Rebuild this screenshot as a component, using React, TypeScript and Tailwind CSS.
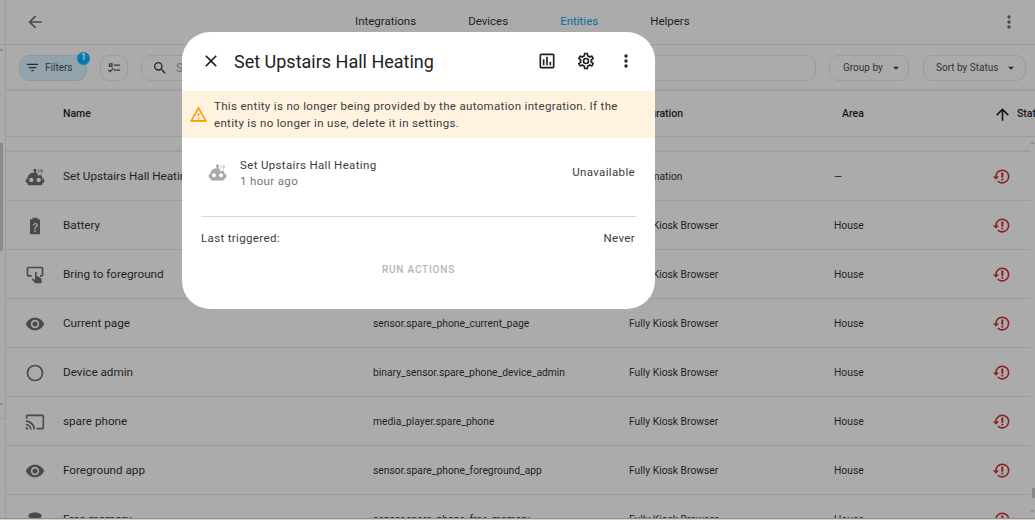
import type { ReactNode } from 'react';

const mdi = {
  back: 'M20,11V13H8L13.5,18.5L12.08,19.92L4.16,12L12.08,4.08L13.5,5.5L8,11H20Z',
  dots: 'M12,16A2,2 0 0,1 14,18A2,2 0 0,1 12,20A2,2 0 0,1 10,18A2,2 0 0,1 12,16M12,10A2,2 0 0,1 14,12A2,2 0 0,1 12,14A2,2 0 0,1 10,12A2,2 0 0,1 12,10M12,4A2,2 0 0,1 14,6A2,2 0 0,1 12,8A2,2 0 0,1 10,6A2,2 0 0,1 12,4Z',
  close: 'M19,6.41L17.59,5L12,10.59L6.41,5L5,6.41L10.59,12L5,17.59L6.41,19L12,13.41L17.59,19L19,17.59L13.41,12L19,6.41Z',
  filter: 'M6,13H18V11H6M3,6V8H21V6M10,18H14V16H10V18Z',
  search: 'M9.5,3A6.5,6.5 0 0,1 16,9.5C16,11.11 15.41,12.59 14.44,13.73L14.71,14H15.5L20.5,19L19,20.5L14,15.5V14.71L13.73,14.44C12.59,15.41 11.11,16 9.5,16A6.5,6.5 0 0,1 3,9.5A6.5,6.5 0 0,1 9.5,3M9.5,5C7,5 5,7 5,9.5C5,12 7,14 9.5,14C12,14 14,12 14,9.5C14,7 12,5 9.5,5Z',
  select: 'M3 5H9V11H3V5M5 7V9H7V7H5M11 7H21V9H11V7M11 15H21V17H11V15M5 20L1.5 16.5L2.91 15.09L5 17.17L9.59 12.59L11 14L5 20Z',
  alert: 'M12,2L1,21H23M12,6L19.53,19H4.47M11,10V14H13V10M11,16V18H13V16',
  eye: 'M12,9A3,3 0 0,0 9,12A3,3 0 0,0 12,15A3,3 0 0,0 15,12A3,3 0 0,0 12,9M12,17A5,5 0 0,1 7,12A5,5 0 0,1 12,7A5,5 0 0,1 17,12A5,5 0 0,1 12,17M12,4.5C7,4.5 2.73,7.61 1,12C2.73,16.39 7,19.5 12,19.5C17,19.5 21.27,16.39 23,12C21.27,7.61 17,4.5 12,4.5Z',
  cast: 'M1,10V12A9,9 0 0,1 10,21H12C12,14.92 7.07,10 1,10M1,14V16A5,5 0 0,1 6,21H8A7,7 0 0,0 1,14M1,18V21H4A3,3 0 0,0 1,18M21,3H3C1.89,3 1,3.89 1,5V8H3V5H21V19H14V21H21A2,2 0 0,0 23,19V5C23,3.89 22.1,3 21,3Z',
  circle: 'M12,20A8,8 0 0,1 4,12A8,8 0 0,1 12,4A8,8 0 0,1 20,12A8,8 0 0,1 12,20M12,2A10,10 0 0,0 2,12A10,10 0 0,0 12,22A10,10 0 0,0 22,12A10,10 0 0,0 12,2Z',
  chart: 'M9 17H7V10H9V17M13 17H11V7H13V17M17 17H15V13H17V17M19 19H5V5H19V19.1M19 3H5C3.9 3 3 3.9 3 5V19C3 20.1 3.9 21 5 21H19C20.1 21 21 20.1 21 19V5C21 3.9 20.1 3 19 3Z',
  cog: 'M12,8A4,4 0 0,1 16,12A4,4 0 0,1 12,16A4,4 0 0,1 8,12A4,4 0 0,1 12,8M12,10A2,2 0 0,0 10,12A2,2 0 0,0 12,14A2,2 0 0,0 14,12A2,2 0 0,0 12,10M10,22C9.75,22 9.54,21.82 9.5,21.58L9.13,18.93C8.5,18.68 7.96,18.34 7.44,17.94L4.95,18.95C4.73,19.03 4.46,18.95 4.34,18.73L2.34,15.27C2.21,15.05 2.27,14.78 2.46,14.63L4.57,12.97L4.5,12L4.57,11L2.46,9.37C2.27,9.22 2.21,8.95 2.34,8.73L4.34,5.27C4.46,5.05 4.73,4.96 4.95,5.05L7.44,6.05C7.96,5.66 8.5,5.32 9.13,5.07L9.5,2.42C9.54,2.18 9.75,2 10,2H14C14.25,2 14.46,2.18 14.5,2.42L14.87,5.07C15.5,5.32 16.04,5.66 16.56,6.05L19.05,5.05C19.27,4.96 19.54,5.05 19.66,5.27L21.66,8.73C21.79,8.95 21.73,9.22 21.54,9.37L19.43,11L19.5,12L19.43,13L21.54,14.63C21.73,14.78 21.79,15.05 21.66,15.27L19.66,18.73C19.54,18.95 19.27,19.04 19.05,18.95L16.56,17.95C16.04,18.34 15.5,18.68 14.87,18.93L14.5,21.58C14.46,21.82 14.25,22 14,22H10M11.25,4L10.88,6.61C9.68,6.86 8.62,7.5 7.85,8.39L5.44,7.35L4.69,8.65L6.8,10.2C6.4,11.37 6.4,12.64 6.8,13.8L4.68,15.36L5.43,16.66L7.86,15.62C8.63,16.5 9.68,17.14 10.87,17.38L11.24,20H12.76L13.13,17.39C14.32,17.14 15.37,16.5 16.14,15.62L18.57,16.66L19.32,15.36L17.2,13.81C17.6,12.64 17.6,11.37 17.2,10.2L19.31,8.65L18.56,7.35L16.15,8.39C15.38,7.5 14.32,6.86 13.12,6.62L12.75,4H11.25Z',
  battery: 'M16.67,4H15V2H9V4H7.33A1.33,1.33 0 0,0 6,5.33V20.66C6,21.4 6.6,22 7.33,22H16.67C17.4,22 18,21.4 18,20.67V5.33C18,4.6 17.4,4 16.67,4M13,19H11V17H13V19M14.6,12.7L13.5,13.8C12.9,14.4 12.75,14.9 12.75,15.8H11.2C11.2,14.6 11.6,13.8 12.4,13L13.3,12.1C13.8,11.6 13.8,10.7 13.3,10.3C12.6,9.6 11,9.9 10.8,11.4H9.2C9.5,8.4 13.2,7.3 14.7,9.2C15.6,10.3 15.5,11.8 14.6,12.7Z',
  tap: 'M20 2H4C2.9 2 2 2.9 2 4V12C2 13.11 2.9 14 4 14H8V12H4V4H20V12H18V14H20C21.1 14 22 13.1 22 12V4C22 2.9 21.1 2 20 2M20 20.5C19.97 21.32 19.32 21.97 18.5 22H13C12.62 22 12.26 21.85 12 21.57L8 17.37L8.74 16.6C8.93 16.39 9.2 16.28 9.5 16.28H9.7L12 18V9C12 8.45 12.45 8 13 8S14 8.45 14 9V13.47L15.21 13.6L19.15 15.79C19.68 16.03 20 16.56 20 17.14V20.5Z',
  robot: 'M20 4H18V3H20.5C20.78 3 21 3.22 21 3.5V5.5C21 5.78 20.78 6 20.5 6H20V7H19V5H20V4M19 9H20V8H19V9M17 3H16V7H17V3M23 15V18C23 18.55 22.55 19 22 19H21V20C21 21.11 20.11 22 19 22H5C3.9 22 3 21.11 3 20V19H2C1.45 19 1 18.55 1 18V15C1 14.45 1.45 14 2 14H3C3 10.13 6.13 7 10 7H11V5.73C10.4 5.39 10 4.74 10 4C10 2.9 10.9 2 12 2S14 2.9 14 4C14 4.74 13.6 5.39 13 5.73V7H14C14.34 7 14.67 7.03 15 7.08V10H19.74C20.53 11.13 21 12.5 21 14H22C22.55 14 23 14.45 23 15M10 15.5C10 14.12 8.88 13 7.5 13S5 14.12 5 15.5 6.12 18 7.5 18 10 16.88 10 15.5M19 15.5C19 14.12 17.88 13 16.5 13S14 14.12 14 15.5 15.12 18 16.5 18 19 16.88 19 15.5Z',
  restore: 'M13,3A9,9 0 0,0 4,12H1L4.89,15.89L4.96,16.03L9,12H6A7,7 0 0,1 13,5A7,7 0 0,1 20,12A7,7 0 0,1 13,19C11.07,19 9.32,18.21 8.06,16.94L6.64,18.36C8.27,20 10.5,21 13,21A9,9 0 0,0 22,12A9,9 0 0,0 13,3M11.75,7V13.5H14.25V7M11.75,14.75V17H14.25V14.75',
  up: 'M13,20H11V8L5.5,13.5L4.08,12.08L12,4.16L19.92,12.08L18.5,13.5L13,8V20Z',
  down: 'M7,10L12,15L17,10H7Z',
  database: 'M12,3C7.58,3 4,4.79 4,7C4,9.21 7.58,11 12,11C16.42,11 20,9.21 20,7C20,4.79 16.42,3 12,3M4,9V12C4,14.21 7.58,16 12,16C16.42,16 20,14.21 20,12V9C20,11.21 16.42,13 12,13C7.58,13 4,11.21 4,9M4,14V17C4,19.21 7.58,21 12,21C16.42,21 20,19.21 20,17V14C20,16.21 16.42,18 12,18C7.58,18 4,16.21 4,14Z',
};

function Icon({ d, className }: { d: string; className: string }) {
  return (
    <svg viewBox="0 0 24 24" fill="currentColor" fillRule="evenodd" className={className}>
      <path d={d} />
    </svg>
  );
}

function ScrollArrow({ className }: { className: string }) {
  return (
    <svg viewBox="0 0 6 4" fill="#8f8f8f" className={`absolute h-[3px] w-[5px] ${className}`}>
      <path d="M3 0L6 4H0Z" />
    </svg>
  );
}

const rows = [
  { icon: mdi.robot, name: 'Set Upstairs Hall Heating', entity: '', integration: 'Automation', area: '—' },
  { icon: mdi.battery, name: 'Battery', entity: 'sensor.spare_phone_battery', integration: 'Fully Kiosk Browser', area: 'House' },
  { icon: mdi.tap, name: 'Bring to foreground', entity: 'button.spare_phone_bring_to_foreground', integration: 'Fully Kiosk Browser', area: 'House' },
  { icon: mdi.eye, name: 'Current page', entity: 'sensor.spare_phone_current_page', integration: 'Fully Kiosk Browser', area: 'House' },
  { icon: mdi.circle, name: 'Device admin', entity: 'binary_sensor.spare_phone_device_admin', integration: 'Fully Kiosk Browser', area: 'House' },
  { icon: mdi.cast, name: 'spare phone', entity: 'media_player.spare_phone', integration: 'Fully Kiosk Browser', area: 'House' },
  { icon: mdi.eye, name: 'Foreground app', entity: 'sensor.spare_phone_foreground_app', integration: 'Fully Kiosk Browser', area: 'House' },
  { icon: mdi.database, name: 'Free memory', entity: 'sensor.spare_phone_free_memory', integration: 'Fully Kiosk Browser', area: 'House' },
];

function Pill({ children, className }: { children: ReactNode; className: string }) {
  return (
    <div className={`flex h-[26px] items-center rounded-[10px] border border-[#9c9c9c] ${className}`}>
      {children}
    </div>
  );
}

function Tab({ label, active }: { label: string; active?: boolean }) {
  return <span className={`text-[11.5px] ${active ? 'text-[#0a6d9e]' : 'text-[#1f1f1f]'}`}>{label}</span>;
}

export default function App() {
  return (
    <div className="relative flex h-[520px] w-[1035px] flex-col overflow-hidden bg-[#ababab] font-['Roboto',sans-serif]">
      <div className="flex min-h-0 flex-1">
        {/* sidebar edge + page scrollbar */}
        <div className="relative w-[6px] shrink-0 border-r border-[#9f9f9f]">
          <div className="absolute left-0 top-[44px] h-px w-[5px] bg-[#9c9c9c]" />
          <ScrollArrow className="-left-[1px] top-[48px]" />
          <div className="absolute left-0 top-[143px] h-[108px] w-[3px] bg-[#8a8a8a]" />
          <ScrollArrow className="-left-[1px] top-[403px] rotate-180" />
          <div className="absolute left-0 top-[418px] h-px w-[5px] bg-[#9c9c9c]" />
        </div>

        <div className="flex min-w-0 flex-1 flex-col">
          <header className="relative flex h-[45px] shrink-0 items-center border-b border-[#9c9c9c]">
            <Icon d={mdi.back} className="ml-[19px] h-[20px] w-[20px] text-[#4a4a4a]" />
            <nav className="absolute left-[349px] flex gap-[52px]">
              <Tab label="Integrations" />
              <Tab label="Devices" />
              <Tab label="Entities" active />
              <Tab label="Helpers" />
            </nav>
            <Icon d={mdi.dots} className="ml-auto mr-[16px] h-[20px] w-[20px] text-[#4a4a4a]" />
          </header>

          <div className="flex h-[46px] shrink-0 items-center border-b-2 border-[#9f9f9f] pl-[13px] pt-px">
            <div className="relative mr-[13px] flex h-[26px] w-[68px] items-center rounded-[10px] border border-[#8d9ba3] bg-[#92a3ad] pl-[5px]">
              <Icon d={mdi.filter} className="h-[15px] w-[15px] text-[#2a2a2a]" />
              <span className="ml-[5px] text-[10px] text-[#333333]">Filters</span>
              <span className="absolute -right-[4px] -top-[4px] flex h-[13px] w-[13px] items-center justify-center rounded-full bg-[#0a78b0] text-[9px] text-[#d5d5d5]">1</span>
            </div>
            <Pill className="mr-[13px] w-[28px] justify-center">
              <Icon d={mdi.select} className="h-[15px] w-[15px] text-[#3a3a3a]" />
            </Pill>
            <Pill className="mr-[13px] min-w-0 flex-1 pl-[10px]">
              <Icon d={mdi.search} className="h-[16px] w-[16px] text-[#2a2a2a]" />
              <span className="ml-[8px] text-[12px] text-[#6f6f6f]">Search</span>
            </Pill>
            <Pill className="mr-[14px] w-[80px] pl-[13px]">
              <span className="text-[10px] text-[#333333]">Group by</span>
              <Icon d={mdi.down} className="ml-[6px] h-[14px] w-[14px] text-[#2a2a2a]" />
            </Pill>
            <Pill className="mr-[9px] w-[103px] pl-[12px]">
              <span className="whitespace-nowrap text-[10px] text-[#333333]">Sort by Status</span>
              <Icon d={mdi.down} className="ml-[6px] h-[14px] w-[14px] shrink-0 text-[#2a2a2a]" />
            </Pill>
          </div>

          <div className="flex h-[46px] shrink-0 items-center overflow-hidden border-b border-[#9c9c9c] pt-px text-[10.5px] font-medium text-[#161616]">
            <span className="ml-[57px] w-[310px] shrink-0">Name</span>
            <span className="w-[259px] shrink-0">Entity ID</span>
            <span className="w-[210px] shrink-0">Integration</span>
            <span className="w-[151px] shrink-0">Area</span>
            <Icon d={mdi.up} className="h-[19px] w-[19px] shrink-0 text-[#111111]" />
            <span className="ml-[5px] whitespace-nowrap">Status</span>
          </div>

          <div className="relative min-h-0 flex-1 overflow-hidden pr-[5px]">
            <div className="h-[15px] border-b-2 border-[#9f9f9f]" />
            {rows.map((row) => (
              <div key={row.name} className="flex h-[49px] items-center border-b border-[#9c9c9c] pt-px">
                <Icon d={row.icon} className="ml-[19px] h-[20px] w-[20px] shrink-0 text-[#4a4a4a]" />
                <span className="ml-[18px] w-[310px] shrink-0 text-[11.7px] text-[#1f1f1f]">{row.name}</span>
                <span className="w-[256px] shrink-0 truncate text-[10.3px] text-[#1f1f1f]">{row.entity}</span>
                <span className="w-[205px] shrink-0 text-[10.3px] text-[#1f1f1f]">{row.integration}</span>
                <span className="w-[158px] shrink-0 text-[10.3px] text-[#1f1f1f]">{row.area}</span>
                <Icon d={mdi.restore} className="h-[19px] w-[19px] shrink-0 text-[#8a1f1f]" />
              </div>
            ))}
            {/* table scrollbar */}
            <ScrollArrow className="right-0 top-[4px]" />
            <div className="absolute right-0 top-[351px] h-[10px] w-[3px] bg-[#8a8a8a]" />
            <ScrollArrow className="right-0 top-[373px] rotate-180" />
          </div>
        </div>
      </div>

      {/* window edge */}
      <div className="h-[2px] shrink-0 border-t border-[#8f8f8f] bg-[#d8d4c4]" />

      {/* dialog */}
      <div className="absolute left-[182px] top-[32px] flex h-[277px] w-[473px] flex-col overflow-hidden rounded-[28px] bg-white text-[#212121]">
        <div className="flex h-[59px] shrink-0 items-center pb-px">
          <Icon d={mdi.close} className="ml-[19px] h-[20px] w-[20px]" />
          <h1 className="ml-[13px] text-[18px] font-normal">Set Upstairs Hall Heating</h1>
          <Icon d={mdi.chart} className="ml-auto h-[20px] w-[20px]" />
          <Icon d={mdi.cog} className="ml-[19px] h-[20px] w-[20px]" />
          <Icon d={mdi.dots} className="ml-[20px] mr-[19px] h-[20px] w-[20px]" />
        </div>
        <div className="flex h-[47px] shrink-0 items-center bg-[#fff3e0]">
          <Icon d={mdi.alert} className="ml-[7px] h-[19px] w-[19px] shrink-0 text-[#ff9800]" />
          <p className="ml-[6px] w-[410px] text-[11.5px] leading-[17px] tracking-[0.33px] text-[#3c3c3c]">
            This entity is no longer being provided by the automation integration. If the entity is no longer in use, delete it in settings.
          </p>
        </div>
        <div className="mx-[19px] flex h-[79px] shrink-0 items-center border-b border-[#d9d9d9] pb-[9px]">
          <Icon d={mdi.robot} className="ml-[7px] h-[19px] w-[19px] shrink-0 text-[#a9a9a9]" />
          <div className="ml-[13px] flex flex-col">
            <span className="text-[11.5px] leading-[16px] tracking-[0.35px] text-[#3c3c3c]">Set Upstairs Hall Heating</span>
            <span className="text-[11.5px] leading-[16px] tracking-[0.35px] text-[#757575]">1 hour ago</span>
          </div>
          <span className="ml-auto mr-px text-[11.5px] tracking-[0.35px] text-[#3c3c3c]">Unavailable</span>
        </div>
        <div className="mx-[19px] mt-[13px] flex justify-between text-[11.5px] tracking-[0.35px] text-[#3c3c3c]">
          <span>Last triggered:</span>
          <span className="mr-px">Never</span>
        </div>
        <div className="mt-[15px] text-center text-[10px] font-medium tracking-[0.8px] text-[#b5b5b5]">RUN ACTIONS</div>
      </div>
    </div>
  );
}
